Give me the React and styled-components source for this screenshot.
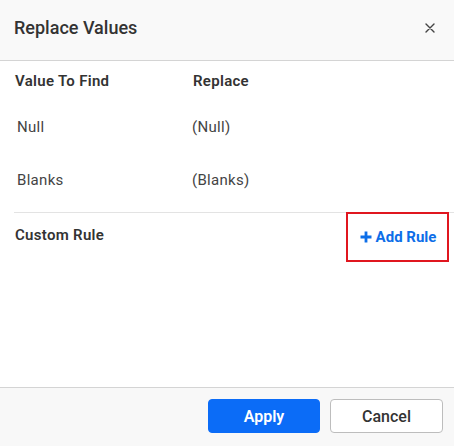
import React from 'react';
import styled, { createGlobalStyle } from 'styled-components';

const GlobalStyle = createGlobalStyle`
  html, body {
    margin: 0;
    padding: 0;
    background: #ffffff;
    font-family: Roboto, "Liberation Sans", Arial, sans-serif;
  }
  * { box-sizing: border-box; }
`;

const Dialog = styled.div`
  width: 454px;
  height: 446px;
  display: flex;
  flex-direction: column;
  background: #ffffff;
`;

const Header = styled.div`
  height: 61px;
  flex-shrink: 0;
  display: flex;
  align-items: center;
  justify-content: space-between;
  padding: 0 16px 0 14px;
  background: #f9f9f9;
  border-bottom: 1px solid #d4d4d4;
`;

const Title = styled.h2`
  margin: 0;
  font-size: 18px;
  font-weight: 500;
  color: #333333;
  padding-bottom: 6px;
`;

const Close = styled.button`
  border: none;
  background: none;
  padding: 0;
  width: 16px;
  height: 16px;
  display: flex;
  align-items: center;
  justify-content: center;
  cursor: pointer;
  margin-bottom: 5px;
`;

const Body = styled.div`
  flex: 1;
  display: flex;
  flex-direction: column;
`;

const Grid = styled.div`
  display: grid;
  grid-template-columns: 177px 1fr;
  padding-left: 15px;
`;

const Cell = styled.div`
  height: ${p => p.$h}px;
  display: flex;
  align-items: center;
  font-size: 15px;
  letter-spacing: 0.3px;
  font-weight: ${p => (p.$head ? 600 : 400)};
  color: ${p => (p.$head ? '#333333' : '#444444')};
  padding-left: ${p => p.$indent || 0}px;
`;

const Divider = styled.div`
  margin: 6px 0 0 14px;
  border-top: 1px solid #e3e3e3;
`;

const RuleRow = styled.div`
  display: flex;
  align-items: center;
  justify-content: space-between;
  padding: 0 5px 0 15px;
  margin-top: -1px;
`;

const RuleLabel = styled.div`
  font-size: 15px;
  letter-spacing: 0.3px;
  font-weight: 600;
  color: #333333;
  padding-bottom: 4px;
`;

const AddRule = styled.button`
  width: 103px;
  height: 50px;
  border: 2px solid #e0161f;
  background: #ffffff;
  display: flex;
  align-items: center;
  justify-content: center;
  gap: 4px;
  color: #0d6ee8;
  font-family: Roboto, "Liberation Sans", Arial, sans-serif;
  font-size: 15px;
  font-weight: 700;
  padding: 0 0 0 1px;
  cursor: pointer;
`;

const Footer = styled.div`
  height: 59px;
  flex-shrink: 0;
  display: flex;
  align-items: center;
  justify-content: flex-end;
  gap: 10px;
  padding: 0 11px 2px 0;
  background: #f8f8f8;
  border-top: 1px solid #d4d4d4;
`;

const Button = styled.button`
  width: ${p => p.$w}px;
  height: 34px;
  border-radius: 4px;
  font-family: Roboto, "Liberation Sans", Arial, sans-serif;
  font-size: 16px;
  font-weight: ${p => (p.$primary ? 600 : 500)};
  color: ${p => (p.$primary ? '#ffffff' : '#333333')};
  background: ${p => (p.$primary ? '#0b6cf7' : '#ffffff')};
  border: 1px solid ${p => (p.$primary ? '#0b6cf7' : '#bdbdbd')};
  cursor: pointer;
`;

const rows = [
  { find: 'Null', replace: '(Null)' },
  { find: 'Blanks', replace: '(Blanks)' },
];

export default function App() {
  return (
    <>
      <GlobalStyle />
      <Dialog>
        <Header>
          <Title>Replace Values</Title>
          <Close aria-label="Close">
            <svg width="10" height="10" viewBox="0 0 10 10">
              <path d="M1 1L9 9M9 1L1 9" stroke="#444" strokeWidth="1.4" strokeLinecap="round" />
            </svg>
          </Close>
        </Header>
        <Body>
          <Grid>
            <Cell $head $h={39}>Value To Find</Cell>
            <Cell $head $h={39} $indent={1}>Replace</Cell>
            {rows.map(r => (
              <React.Fragment key={r.find}>
                <Cell $h={53} $indent={2}>{r.find}</Cell>
                <Cell $h={53}>{r.replace}</Cell>
              </React.Fragment>
            ))}
          </Grid>
          <Divider />
          <RuleRow>
            <RuleLabel>Custom Rule</RuleLabel>
            <AddRule>
              <svg width="12" height="12" viewBox="0 0 12 12">
                <path d="M6 0.5V11.5M0.5 6H11.5" stroke="#0d6ee8" strokeWidth="2.8" />
              </svg>
              Add Rule
            </AddRule>
          </RuleRow>
        </Body>
        <Footer>
          <Button $primary $w={112}>Apply</Button>
          <Button $w={113}>Cancel</Button>
        </Footer>
      </Dialog>
    </>
  );
}
